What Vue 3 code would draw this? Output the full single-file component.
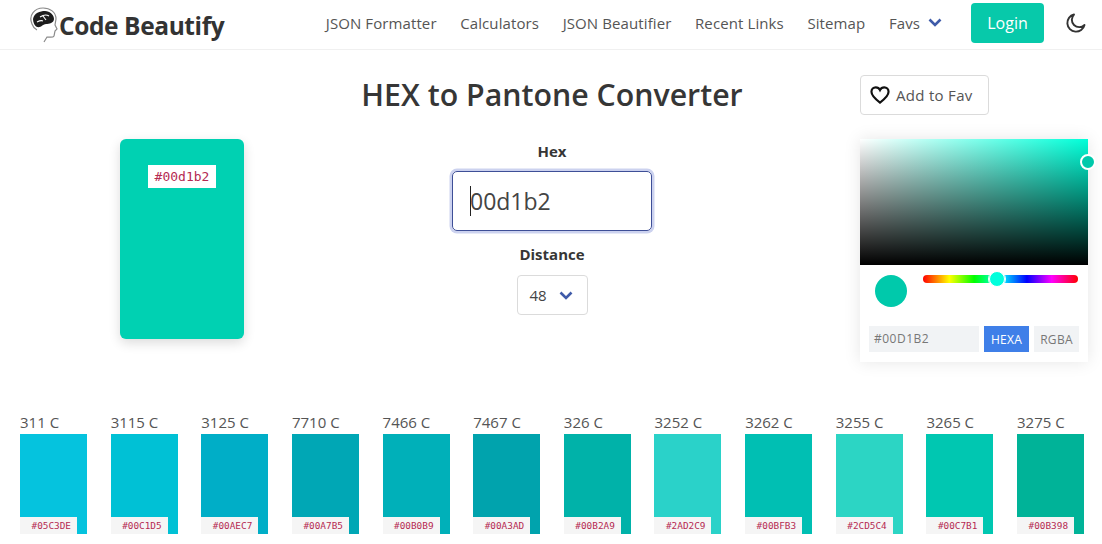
<script setup>
const links = ['JSON Formatter', 'Calculators', 'JSON Beautifier', 'Recent Links', 'Sitemap']
const swatches = [
  ['311 C', '#05C3DE'], ['3115 C', '#00C1D5'], ['3125 C', '#00AEC7'], ['7710 C', '#00A7B5'],
  ['7466 C', '#00B0B9'], ['7467 C', '#00A3AD'], ['326 C', '#00B2A9'], ['3252 C', '#2AD2C9'],
  ['3262 C', '#00BFB3'], ['3255 C', '#2CD5C4'], ['3265 C', '#00C7B1'], ['3275 C', '#00B398']
]
</script>

<template>
  <div class="page">
    <header class="topbar">
      <div class="brand">
        <svg class="brain" width="30" height="36" viewBox="0 0 30 36">
          <path d="M3 17C-1 8 6 1 14 1c7 0 13 4 13 11l-1 6 2 4-2 2-1 5c-1 2-4 1-7 1l-3 5M3 17c1 3 3 5 5 6" fill="none" stroke="#8a8a8a" stroke-width="1.200"/>
          <path d="M4 12C5 6 11 4 16 4c5 0 9 4 9 8 0 4-5 5-8 5-3 0-5 4-9 3-2-1-4-4-4-8z" fill="#1c1c1c"/>
          <path d="M11 10c3-2 6-3 9-1M14 9l3 4M8 15c2-1 4-2 6-1" fill="none" stroke="#fff" stroke-width="1.100"/>
        </svg>
        <span class="brand-name">Code Beautify</span>
      </div>
      <nav class="nav">
        <a v-for="l in links" :key="l" class="nav-link">{{ l }}</a>
        <a class="nav-link favs">Favs
          <svg class="chev" width="14" height="9" viewBox="0 0 14 9"><path d="M1.500 1.500L7 7l5.500-5.500" fill="none" stroke="#3f5ba9" stroke-width="2.600"/></svg>
        </a>
        <button class="login">Login</button>
        <svg class="moon" width="20" height="20" viewBox="0 0 20 20"><path d="M8 1.500A8.700 8.700 0 1 0 18.500 12 7.200 7.200 0 0 1 8 1.500z" fill="none" stroke="#333" stroke-width="1.900" stroke-linejoin="round"/></svg>
      </nav>
    </header>

    <main class="main">
      <div class="spacer"></div>
      <h1 class="title">HEX to Pantone Converter</h1>
      <div class="fav-cell">
        <button class="fav">
          <svg width="20" height="18" viewBox="0 0 22 20"><path d="M11 18.500C5 14 1.500 10.500 1.500 6.500 1.500 3.500 3.700 1.500 6.300 1.500c2 0 3.700 1 4.700 3 1-2 2.700-3 4.700-3 2.600 0 4.800 2 4.800 5 0 4-3.500 7.500-9.500 12z" fill="none" stroke="#111" stroke-width="2.400"/></svg>
          <span>Add to Fav</span>
        </button>
      </div>

      <div class="color-card"><code class="color-tag">#00d1b2</code></div>

      <div class="form">
        <label class="label">Hex</label>
        <div class="hex-input"><span class="caret"></span>00d1b2</div>
        <label class="label dist">Distance</label>
        <div class="select">48
          <svg width="14" height="9" viewBox="0 0 14 9"><path d="M1.500 1.500L7 7l5.500-5.500" fill="none" stroke="#3f5ba9" stroke-width="2.600"/></svg>
        </div>
      </div>

      <div class="picker">
        <div class="sv"><span class="sv-thumb"></span></div>
        <div class="controls">
          <span class="preview"></span>
          <div class="hue"><span class="hue-thumb"></span></div>
        </div>
        <div class="value-row">
          <div class="value">#00D1B2</div>
          <button class="mode active">HEXA</button>
          <button class="mode">RGBA</button>
        </div>
      </div>
    </main>

    <section class="swatches">
      <div v-for="s in swatches" :key="s[0]" class="swatch">
        <div class="swatch-name">{{ s[0] }}</div>
        <div class="swatch-box" :style="{ background: s[1] }">
          <code class="swatch-hex">{{ s[1] }}</code>
        </div>
      </div>
    </section>
  </div>
</template>

<style>
html, body { margin: 0; background: #fff; overflow: hidden; }
</style>

<style scoped>
.page {
  width: 1102px;
  height: 544px;
  overflow: hidden;
  font-family: "Open Sans", "Liberation Sans", sans-serif;
  color: #363636;
}
.topbar {
  height: 49px;
  box-sizing: content-box;
  border-bottom: 1px solid #f0f0f0;
  display: flex;
  align-items: center;
  justify-content: space-between;
  padding: 0 16px 0 29px;
}
.brand { display: flex; align-items: center; margin-top: -1px; }
.brain { margin-top: 2px; }
.brand-name {
  font-weight: 700;
  font-size: 24.500px;
  letter-spacing: -0.400px;
  color: #333;
  margin-top: 3px;
}
.nav { display: flex; align-items: center; font-size: 15px; letter-spacing: .1px; color: #555; margin-bottom: 4px; }
.nav-link { margin-right: 23.600px; white-space: nowrap; }
.favs { display: flex; align-items: center; gap: 8px; margin-right: 29px; }
.login {
  width: 73px;
  height: 40px;
  border: 0;
  border-radius: 4px;
  background: #07c9aa;
  color: #fff;
  font: 16px "Open Sans", sans-serif;
  margin-right: 22px;
}
.moon { display: block; }

.main {
  display: grid;
  grid-template-columns: 124px 616px 228px;
  padding: 25px 0 0 120px;
  row-gap: 24px;
  align-items: start;
}
.title {
  margin: 0;
  height: 40px;
  line-height: 40px;
  text-align: center;
  font-size: 30.300px;
  font-weight: 600;
  color: #363636;
}
.fav {
  width: 129px;
  height: 40px;
  display: flex;
  align-items: center;
  gap: 6px;
  background: #fff;
  border: 1px solid #dbdbdb;
  border-radius: 4px;
  font: 15px "Open Sans", sans-serif;
  letter-spacing: .3px;
  color: #555;
  padding: 0 0 0 9px;
}
.color-card {
  height: 200px;
  background: #00d1b2;
  border-radius: 6px;
  box-shadow: 0 4px 12px rgba(0,0,0,.14);
  display: flex;
  justify-content: center;
  align-items: flex-start;
  padding-top: 26px;
  box-sizing: border-box;
}
.color-tag {
  width: 68px;
  height: 23px;
  background: #fff;
  color: #b52a52;
  font: 13px/24px "DejaVu Sans Mono", monospace;
  text-align: center;
}
.form { display: flex; flex-direction: column; align-items: center; }
.label { font-size: 15px; font-weight: 700; color: #363636; line-height: 24px; }
.dist { margin-top: 11px; }
.hex-input {
  margin-top: 8px;
  width: 200px;
  height: 60px;
  box-sizing: border-box;
  border: 1.500px solid #3e4f97;
  border-radius: 5px;
  box-shadow: 0 0 0 2.500px rgba(72,95,199,.28);
  display: flex;
  align-items: center;
  padding-left: 17px;
  font-size: 23px;
  color: #444;
}
.caret { width: 1px; height: 30px; background: #222; margin-right: -1px; }
.select {
  margin-top: 9px;
  width: 71px;
  height: 40px;
  box-sizing: border-box;
  border: 1px solid #dbdbdb;
  border-radius: 4px;
  display: flex;
  align-items: center;
  justify-content: center;
  gap: 12px;
  padding-right: 2px;
  font-size: 15px;
  color: #444;
}
.picker {
  width: 228px;
  height: 223px;
  background: #fff;
  box-shadow: 0 0 16px rgba(0,0,0,.1);
  position: relative;
}
.sv {
  height: 126px;
  position: relative;
  background:
    linear-gradient(to top, #000, rgba(0,0,0,0)),
    linear-gradient(to right, #fff, #00ffd9);
}
.sv-thumb {
  position: absolute;
  right: -8px;
  top: 15px;
  width: 12px;
  height: 12px;
  border: 2px solid #fff;
  border-radius: 50%;
  background: #00c9ab;
}
.controls {
  display: flex;
  padding: 10px 10px 0 15px;
  gap: 16px;
  height: 61px;
  box-sizing: border-box;
}
.preview {
  width: 32px;
  height: 32px;
  border-radius: 50%;
  background: #00c9ab;
}
.hue {
  flex: 1;
  height: 8px;
  position: relative;
  border-radius: 4px;
  background: linear-gradient(to right, #f00 0%, #ff0 17%, #0f0 33%, #0ff 50%, #00f 67%, #f0f 83%, #f00 100%);
}
.hue-thumb {
  position: absolute;
  left: 66px;
  top: -4px;
  width: 14px;
  height: 14px;
  border: 1px solid #fff;
  outline: 1px solid #fff;
  border-radius: 50%;
  background: #00ffdc;
}
.value-row { display: flex; padding: 0 9px; gap: 5px; }
.value {
  width: 110px;
  height: 26px;
  box-sizing: border-box;
  padding-left: 5px;
  background: #f1f3f5;
  font-size: 12px;
  line-height: 26px;
  letter-spacing: .5px;
  color: #777;
}
.mode {
  width: 45px;
  height: 26px;
  border: 0;
  padding: 0;
  background: #f1f3f5;
  color: #777;
  font: 12px "Open Sans", sans-serif;
  letter-spacing: .3px;
}
.mode.active { background: #3f7fe8; color: #fff; }

.swatches {
  display: grid;
  grid-template-columns: repeat(12, 67px);
  column-gap: 23.650px;
  padding: 49px 0 0 20px;
}
.swatch-name { font-size: 15px; line-height: 23px; color: #555; white-space: nowrap; }
.swatch-box {
  height: 100px;
  display: flex;
  align-items: flex-end;
}
.swatch-hex {
  width: 57px;
  height: 17px;
  background: #f5f5f5;
  color: #b52a52;
  font: 9.400px/17px "DejaVu Sans Mono", monospace;
  text-align: right;
  padding-right: 6px;
  box-sizing: border-box;
}
</style>
